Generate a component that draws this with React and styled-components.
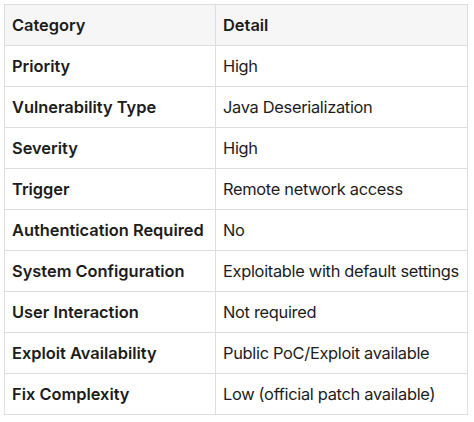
import React from "react";
import styled, { createGlobalStyle } from "styled-components";

const GlobalStyle = createGlobalStyle`
  body {
    margin: 0;
    background: #ffffff;
    font-family: Inter, "Noto Sans", sans-serif;
    color: #1c1c1c;
  }
`;

const SWrap = styled.div`
  padding: 4px 6px 8px 4px;
`;

const STable = styled.table`
  width: 464px;
  border-collapse: collapse;
  table-layout: fixed;
  font-size: 16.4px;
  line-height: 20px;
`;

const SHeadCell = styled.th`
  text-align: left;
  font-weight: 600;
  background: #f6f6f6;
  border: 1px solid #dedede;
  height: 41px;
  padding: 0 7px;
  box-sizing: border-box;
  width: ${(p) => p.$w || "auto"};
`;

const SCell = styled.td`
  border: 1px solid #dedede;
  height: 41px;
  padding: 0 7px;
  box-sizing: border-box;
  font-weight: ${(p) => (p.$bold ? 600 : 400)};
  letter-spacing: ${(p) => (p.$bold ? "0" : "-0.3px")};
  white-space: nowrap;
`;

const rows = [
  ["Priority", "High"],
  ["Vulnerability Type", "Java Deserialization"],
  ["Severity", "High"],
  ["Trigger", "Remote network access"],
  ["Authentication Required", "No"],
  ["System Configuration", "Exploitable with default settings"],
  ["User Interaction", "Not required"],
  ["Exploit Availability", "Public PoC/Exploit available"],
  ["Fix Complexity", "Low (official patch available)"],
];

function App() {
  return (
    <SWrap>
      <GlobalStyle />
      <STable>
        <thead>
          <tr>
            <SHeadCell $w="211px">Category</SHeadCell>
            <SHeadCell>Detail</SHeadCell>
          </tr>
        </thead>
        <tbody>
          {rows.map(([cat, detail]) => (
            <tr key={cat}>
              <SCell $bold>{cat}</SCell>
              <SCell>{detail}</SCell>
            </tr>
          ))}
        </tbody>
      </STable>
    </SWrap>
  );
}

export default App;
